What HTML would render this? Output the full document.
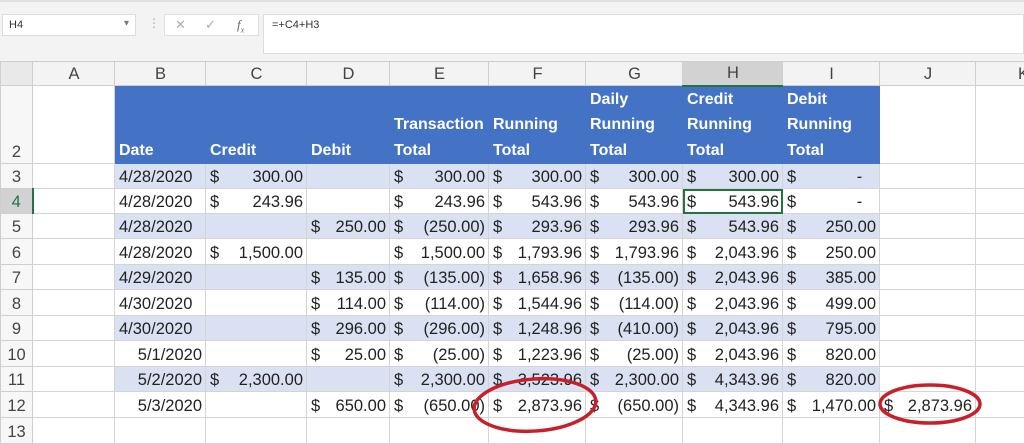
<!DOCTYPE html>
<html><head><meta charset="utf-8"><style>
*{margin:0;padding:0;box-sizing:border-box}
body{width:1024px;height:442px;overflow:hidden;background:#fff;font-family:"Liberation Sans",sans-serif;position:relative}
.top{position:absolute;left:0;top:0;width:1024px;height:61px;background:#f3f3f3;border-top:2px solid #e0e0e0}
.nb{position:absolute;left:2px;top:12px;width:134px;height:22px;background:#fff;border:1px solid #dcdcdc;font-size:11px;color:#333;padding:4px 6px}
.nb:after{content:"▾";position:absolute;right:6px;top:3px;font-size:10px;color:#777}
.ic{position:absolute;left:164px;top:12px;width:95px;height:22px;background:#fff;border:1px solid #e0e0e0;font-size:13px;color:#aaa}
.fb{position:absolute;left:263px;top:12px;width:761px;height:40px;background:#fff;border:1px solid #dcdcdc;font-size:11px;color:#333;padding:4px 8px}
table{position:absolute;left:0;top:61px;width:1030px;border-collapse:collapse;table-layout:fixed;font-size:16.5px;color:#222}
td{border:1px solid #d4d4d4;padding:0 3px 0 4px;white-space:nowrap;overflow:hidden;vertical-align:bottom;line-height:22px}
tr.ch td{background:#f3f3f3;text-align:center;font-size:16.5px;color:#444;height:24px;vertical-align:middle;border-color:#cfcfcf}
td.rh{background:#f7f7f7;text-align:center;font-size:16.5px;color:#444;border-color:#cfcfcf;padding:0}
tr.hd td.b{background:#4472C4;color:#fff;font-weight:bold;line-height:25.5px;border-color:#4472C4;font-size:16px}
tr.l td.b{background:#D9E1F2}
.s{float:left}.v{float:right}
.r{text-align:right}
.sel{outline:2px solid #217346;outline-offset:-2px}
</style></head><body>
<div class="top">
<div class="nb">H4</div>
<div style="position:absolute;left:148px;top:14px;color:#aaa;font-size:12px">⋮</div>
<div class="ic"><span style="position:absolute;left:10px;top:2px">✕</span><span style="position:absolute;left:40px;top:2px">✓</span><span style="position:absolute;left:72px;top:2px;font-style:italic;color:#666;font-family:'Liberation Serif',serif">f<sub style="font-size:8px">x</sub></span></div>
<div class="fb">=+C4+H3</div>
</div>
<table>
<colgroup><col style="width:32px"><col style="width:82px"><col style="width:91px"><col style="width:101px"><col style="width:83px"><col style="width:99px"><col style="width:97px"><col style="width:97px"><col style="width:100px"><col style="width:97px"><col style="width:96px"><col style="width:95px"><col style="width:60px"></colgroup>
<tr class="ch"><td style="background:#e9e9e9"></td><td>A</td><td>B</td><td>C</td><td>D</td><td>E</td><td>F</td><td>G</td><td style="background:#d2d2d2;border-bottom:2px solid #217346">H</td><td>I</td><td>J</td><td>K</td><td></td></tr>
<tr class="hd" style="height:77px"><td class="rh" style="vertical-align:bottom">2</td><td></td><td class="b">Date</td><td class="b">Credit</td><td class="b">Debit</td><td class="b">Transaction<br>Total</td><td class="b">Running<br>Total</td><td class="b">Daily<br>Running<br>Total</td><td class="b">Credit<br>Running<br>Total</td><td class="b">Debit<br>Running<br>Total</td><td></td><td></td><td></td></tr>
<tr class="l" style="height:25px"><td class="rh">3</td><td></td><td class="b">4/28/2020</td><td class="b"><span class="s">$</span><span class="v">300.00</span></td><td class="b"></td><td class="b"><span class="s">$</span><span class="v">300.00</span></td><td class="b"><span class="s">$</span><span class="v">300.00</span></td><td class="b"><span class="s">$</span><span class="v">300.00</span></td><td class="b"><span class="s">$</span><span class="v">300.00</span></td><td class="b"><span class="s">$</span><span class="v">-&nbsp;&nbsp;&nbsp;</span></td><td></td><td></td><td></td></tr>
<tr style="height:25px"><td class="rh" style="background:#d2d2d2;color:#217346;border-right:2px solid #217346">4</td><td></td><td class="b">4/28/2020</td><td class="b"><span class="s">$</span><span class="v">243.96</span></td><td class="b"></td><td class="b"><span class="s">$</span><span class="v">243.96</span></td><td class="b"><span class="s">$</span><span class="v">543.96</span></td><td class="b"><span class="s">$</span><span class="v">543.96</span></td><td class="b sel"><span class="s">$</span><span class="v">543.96</span></td><td class="b"><span class="s">$</span><span class="v">-&nbsp;&nbsp;&nbsp;</span></td><td></td><td></td><td></td></tr>
<tr class="l" style="height:25px"><td class="rh">5</td><td></td><td class="b">4/28/2020</td><td class="b"></td><td class="b"><span class="s">$</span><span class="v">250.00</span></td><td class="b"><span class="s">$</span><span class="v">(250.00)</span></td><td class="b"><span class="s">$</span><span class="v">293.96</span></td><td class="b"><span class="s">$</span><span class="v">293.96</span></td><td class="b"><span class="s">$</span><span class="v">543.96</span></td><td class="b"><span class="s">$</span><span class="v">250.00</span></td><td></td><td></td><td></td></tr>
<tr style="height:26px"><td class="rh">6</td><td></td><td class="b">4/28/2020</td><td class="b"><span class="s">$</span><span class="v">1,500.00</span></td><td class="b"></td><td class="b"><span class="s">$</span><span class="v">1,500.00</span></td><td class="b"><span class="s">$</span><span class="v">1,793.96</span></td><td class="b"><span class="s">$</span><span class="v">1,793.96</span></td><td class="b"><span class="s">$</span><span class="v">2,043.96</span></td><td class="b"><span class="s">$</span><span class="v">250.00</span></td><td></td><td></td><td></td></tr>
<tr class="l" style="height:25px"><td class="rh">7</td><td></td><td class="b">4/29/2020</td><td class="b"></td><td class="b"><span class="s">$</span><span class="v">135.00</span></td><td class="b"><span class="s">$</span><span class="v">(135.00)</span></td><td class="b"><span class="s">$</span><span class="v">1,658.96</span></td><td class="b"><span class="s">$</span><span class="v">(135.00)</span></td><td class="b"><span class="s">$</span><span class="v">2,043.96</span></td><td class="b"><span class="s">$</span><span class="v">385.00</span></td><td></td><td></td><td></td></tr>
<tr style="height:26px"><td class="rh">8</td><td></td><td class="b">4/30/2020</td><td class="b"></td><td class="b"><span class="s">$</span><span class="v">114.00</span></td><td class="b"><span class="s">$</span><span class="v">(114.00)</span></td><td class="b"><span class="s">$</span><span class="v">1,544.96</span></td><td class="b"><span class="s">$</span><span class="v">(114.00)</span></td><td class="b"><span class="s">$</span><span class="v">2,043.96</span></td><td class="b"><span class="s">$</span><span class="v">499.00</span></td><td></td><td></td><td></td></tr>
<tr class="l" style="height:25px"><td class="rh">9</td><td></td><td class="b">4/30/2020</td><td class="b"></td><td class="b"><span class="s">$</span><span class="v">296.00</span></td><td class="b"><span class="s">$</span><span class="v">(296.00)</span></td><td class="b"><span class="s">$</span><span class="v">1,248.96</span></td><td class="b"><span class="s">$</span><span class="v">(410.00)</span></td><td class="b"><span class="s">$</span><span class="v">2,043.96</span></td><td class="b"><span class="s">$</span><span class="v">795.00</span></td><td></td><td></td><td></td></tr>
<tr style="height:26px"><td class="rh">10</td><td></td><td class="b r">5/1/2020</td><td class="b"></td><td class="b"><span class="s">$</span><span class="v">25.00</span></td><td class="b"><span class="s">$</span><span class="v">(25.00)</span></td><td class="b"><span class="s">$</span><span class="v">1,223.96</span></td><td class="b"><span class="s">$</span><span class="v">(25.00)</span></td><td class="b"><span class="s">$</span><span class="v">2,043.96</span></td><td class="b"><span class="s">$</span><span class="v">820.00</span></td><td></td><td></td><td></td></tr>
<tr class="l" style="height:25px"><td class="rh">11</td><td></td><td class="b r">5/2/2020</td><td class="b"><span class="s">$</span><span class="v">2,300.00</span></td><td class="b"></td><td class="b"><span class="s">$</span><span class="v">2,300.00</span></td><td class="b"><span class="s">$</span><span class="v">3,523.96</span></td><td class="b"><span class="s">$</span><span class="v">2,300.00</span></td><td class="b"><span class="s">$</span><span class="v">4,343.96</span></td><td class="b"><span class="s">$</span><span class="v">820.00</span></td><td></td><td></td><td></td></tr>
<tr style="height:26px"><td class="rh">12</td><td></td><td class="b r">5/3/2020</td><td class="b"></td><td class="b"><span class="s">$</span><span class="v">650.00</span></td><td class="b"><span class="s">$</span><span class="v">(650.00)</span></td><td class="b"><span class="s">$</span><span class="v">2,873.96</span></td><td class="b"><span class="s">$</span><span class="v">(650.00)</span></td><td class="b"><span class="s">$</span><span class="v">4,343.96</span></td><td class="b"><span class="s">$</span><span class="v">1,470.00</span></td><td><span class="s">$</span><span class="v">2,873.96</span></td><td></td><td></td></tr>
<tr style="height:26px"><td class="rh">13</td><td></td><td></td><td></td><td></td><td></td><td></td><td></td><td></td><td></td><td></td><td></td><td></td></tr>
</table>
<svg style="position:absolute;left:0;top:0" width="1024" height="442"><ellipse cx="535" cy="405" rx="61" ry="26" fill="none" stroke="#c8202a" stroke-width="3.5" transform="rotate(-4 535 405)"/><ellipse cx="930" cy="404" rx="50" ry="19" fill="none" stroke="#c8202a" stroke-width="3.5"/></svg>
</body></html>
